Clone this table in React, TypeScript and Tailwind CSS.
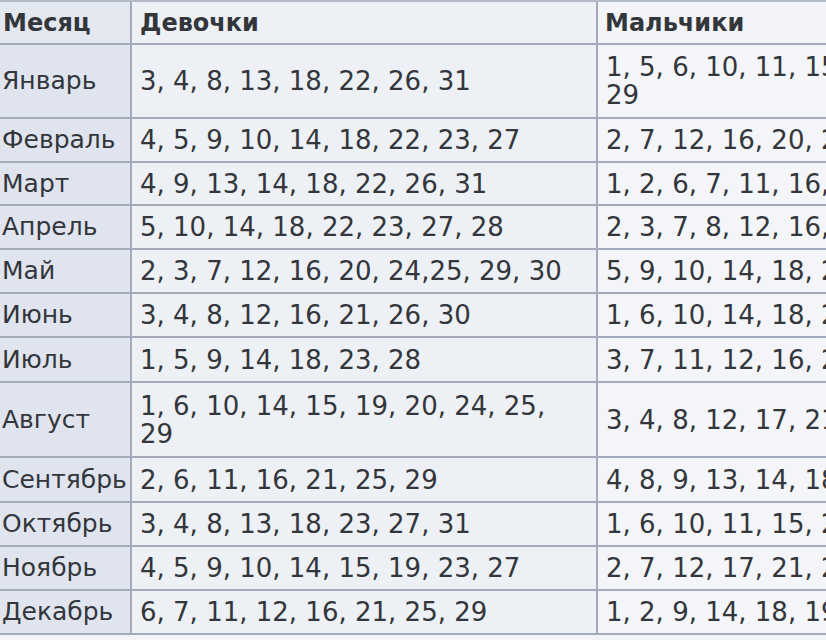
const rows: { month: string; girls: string[]; boys: string[]; h: string }[] = [
  { month: "Январь", girls: ["3, 4, 8, 13, 18, 22, 26, 31"], boys: ["1, 5, 6, 10, 11, 15, 20, 24, 25,", "29"], h: "h-[74px]" },
  { month: "Февраль", girls: ["4, 5, 9, 10, 14, 18, 22, 23, 27"], boys: ["2, 7, 12, 16, 20, 24, 28"], h: "h-[44px]" },
  { month: "Март", girls: ["4, 9, 13, 14, 18, 22, 26, 31"], boys: ["1, 2, 6, 7, 11, 16, 20, 24"], h: "h-[43px]" },
  { month: "Апрель", girls: ["5, 10, 14, 18, 22, 23, 27, 28"], boys: ["2, 3, 7, 8, 12, 16, 20, 24"], h: "h-[44px]" },
  { month: "Май", girls: ["2, 3, 7, 12, 16, 20, 24,25, 29, 30"], boys: ["5, 9, 10, 14, 18, 22, 26"], h: "h-[44px]" },
  { month: "Июнь", girls: ["3, 4, 8, 12, 16, 21, 26, 30"], boys: ["1, 6, 10, 14, 18, 22, 27"], h: "h-[44px]" },
  { month: "Июль", girls: ["1, 5, 9, 14, 18, 23, 28"], boys: ["3, 7, 11, 12, 16, 20, 24"], h: "h-[45px]" },
  { month: "Август", girls: ["1, 6, 10, 14, 15, 19, 20, 24, 25,", "29"], boys: ["3, 4, 8, 12, 17, 21, 26"], h: "h-[75px]" },
  { month: "Сентябрь", girls: ["2, 6, 11, 16, 21, 25, 29"], boys: ["4, 8, 9, 13, 14, 18, 22"], h: "h-[45px]" },
  { month: "Октябрь", girls: ["3, 4, 8, 13, 18, 23, 27, 31"], boys: ["1, 6, 10, 11, 15, 20, 24"], h: "h-[44px]" },
  { month: "Ноябрь", girls: ["4, 5, 9, 10, 14, 15, 19, 23, 27"], boys: ["2, 7, 12, 17, 21, 25"], h: "h-[44px]" },
  { month: "Декабрь", girls: ["6, 7, 11, 12, 16, 21, 25, 29"], boys: ["1, 2, 9, 14, 18, 19, 23"], h: "h-[44px]" },
];

export default function App() {
  return (
    <div
      className="w-[826px] h-[640px] overflow-hidden bg-[#f3f4f7] text-[#33363b]"
      style={{ fontFamily: '"DejaVu Sans", Verdana, sans-serif' }}
    >
      <div className="w-[1100px] border-t-2 border-[#b3bac8]">
        {/* шапка */}
        <div className="grid grid-cols-[132px_466px_502px] h-[43px] border-b-2 border-[#a3abbb] text-[24px] font-bold">
          <div className="flex items-center pl-[3px] bg-[#e2e7f0] border-r-2 border-[#a3abbb]">Месяц</div>
          <div className="flex items-center pl-[8px] bg-[#edf0f5] border-r-2 border-[#a3abbb]">Девочки</div>
          <div className="flex items-center pl-[7px] bg-[#f3f4f7]">Мальчики</div>
        </div>

        {rows.map((r) => (
          <div
            key={r.month}
            className={`grid grid-cols-[132px_466px_502px] ${r.h} border-b-2 border-[#a3abbb] text-[26px] leading-[28px]`}
          >
            <div className="flex items-center pl-[2px] bg-[#dfe4ee] border-r-2 border-[#a3abbb] text-[25px] whitespace-nowrap">
              {r.month}
            </div>
            <div className="flex flex-col justify-center pl-[8px] bg-[#edf0f5] border-r-2 border-[#a3abbb] whitespace-nowrap">
              {r.girls.map((l) => (
                <span key={l}>{l}</span>
              ))}
            </div>
            <div className="flex flex-col justify-center pl-[8px] bg-[#f4f5f8] whitespace-nowrap">
              {r.boys.map((l) => (
                <span key={l}>{l}</span>
              ))}
            </div>
          </div>
        ))}
      </div>
    </div>
  );
}
